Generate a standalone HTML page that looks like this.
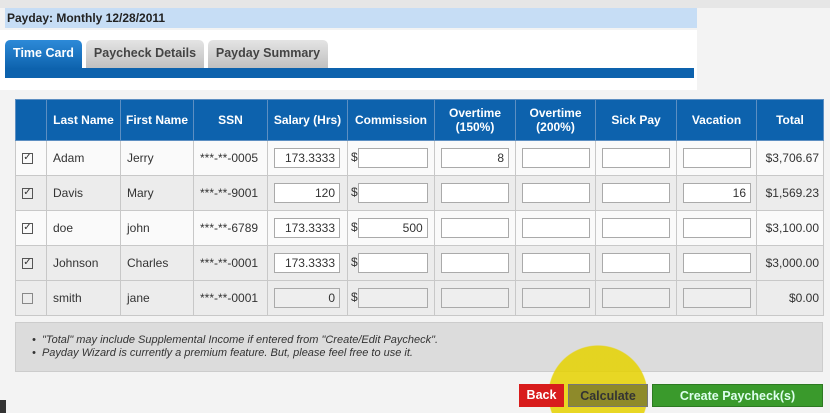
<!DOCTYPE html><html style="width:830px;height:413px;overflow:hidden"><head><style>
body{margin:0;width:830px;height:413px;overflow:hidden;background:#f3f3f3;font-family:"Liberation Sans",Arial,sans-serif;position:relative}
.a{position:absolute}
.hdr{left:5px;top:8px;width:692px;height:20px;background:#c6ddf5;font-weight:bold;font-size:12px;line-height:20px;color:#222;padding-left:2px;box-sizing:border-box}
.tab{top:40px;height:29px;font-weight:bold;font-size:12.5px;line-height:27px;text-align:center;border-radius:5px 5px 0 0;background:linear-gradient(#e4e4e4,#bfbfbf);color:#444}
table{position:absolute;left:15px;top:99px;border-collapse:collapse;font-size:12px;color:#333}
td,th{border:1px solid #c8c8c8;padding:0}
th{background:#0d62ad;color:#fff;font-size:12px;height:40px;border-color:#5d8fc2}
td{height:34px;padding-left:6px}
tr.g td{background:#ececec}
tr.w td{background:#fafafa}
.i{display:inline-block;width:66px;height:20px;border:1px solid #aaa;background:#fff;box-sizing:border-box;text-align:right;padding-right:4px;line-height:18px;vertical-align:middle}
.cb{display:inline-block;width:9px;height:9px;border:1px solid #555;font-size:10px;line-height:8px;text-align:center;vertical-align:middle}
.btn{top:384px;height:23px;font-weight:bold;font-size:12.5px;line-height:23px;text-align:center;color:#fff;box-sizing:border-box}
</style></head><body>
<div class="a" style="left:0;top:0;width:830px;height:8px;background:#e6e6e6"></div>
<div class="a" style="left:0;top:30px;width:697px;height:60px;background:#fff"></div>
<div class="a hdr">Payday: Monthly 12/28/2011</div>
<div class="a tab" style="left:5px;width:77px;background:linear-gradient(#2d8ad8,#0d62ad);color:#fff">Time Card</div>
<div class="a tab" style="left:86px;width:118px">Paycheck Details</div>
<div class="a tab" style="left:208px;width:120px">Payday Summary</div>
<div class="a" style="left:5px;top:68px;width:689px;height:10px;background:#0d62ad"></div>
<table>
<tr><th style="width:30px"></th><th style="width:73px">Last Name</th><th style="width:72px">First Name</th><th style="width:73px">SSN</th><th style="width:79px">Salary (Hrs)</th><th style="width:86px">Commission</th><th style="width:80px">Overtime<br>(150%)</th><th style="width:79px">Overtime<br>(200%)</th><th style="width:80px">Sick Pay</th><th style="width:79px">Vacation</th><th style="width:66px">Total</th></tr>
<tr class="w"><td><span class="cb">✓</span></td><td>Adam</td><td>Jerry</td><td>***-**-0005</td><td><span class="i">173.3333</span></td><td style="padding-left:3px">$<span class="i" style="width:70px"></span></td><td><span class="i" style="width:68px">8</span></td><td><span class="i" style="width:68px"></span></td><td><span class="i" style="width:68px"></span></td><td><span class="i" style="width:68px"></span></td><td style="text-align:right;padding-right:4px">$3,706.67</td></tr>
<tr class="g"><td><span class="cb">✓</span></td><td>Davis</td><td>Mary</td><td>***-**-9001</td><td><span class="i">120</span></td><td style="padding-left:3px">$<span class="i" style="width:70px"></span></td><td><span class="i" style="width:68px"></span></td><td><span class="i" style="width:68px"></span></td><td><span class="i" style="width:68px"></span></td><td><span class="i" style="width:68px">16</span></td><td style="text-align:right;padding-right:4px">$1,569.23</td></tr>
<tr class="w"><td><span class="cb">✓</span></td><td>doe</td><td>john</td><td>***-**-6789</td><td><span class="i">173.3333</span></td><td style="padding-left:3px">$<span class="i" style="width:70px">500</span></td><td><span class="i" style="width:68px"></span></td><td><span class="i" style="width:68px"></span></td><td><span class="i" style="width:68px"></span></td><td><span class="i" style="width:68px"></span></td><td style="text-align:right;padding-right:4px">$3,100.00</td></tr>
<tr class="g"><td><span class="cb">✓</span></td><td>Johnson</td><td>Charles</td><td>***-**-0001</td><td><span class="i">173.3333</span></td><td style="padding-left:3px">$<span class="i" style="width:70px"></span></td><td><span class="i" style="width:68px"></span></td><td><span class="i" style="width:68px"></span></td><td><span class="i" style="width:68px"></span></td><td><span class="i" style="width:68px"></span></td><td style="text-align:right;padding-right:4px">$3,000.00</td></tr>
<tr class="g"><td><span class="cb" style="border-color:#888"></span></td><td>smith</td><td>jane</td><td>***-**-0001</td><td><span class="i" style="background:#eee">0</span></td><td style="padding-left:3px">$<span class="i" style="width:70px;background:#eee"></span></td><td><span class="i" style="width:68px;background:#eee"></span></td><td><span class="i" style="width:68px;background:#eee"></span></td><td><span class="i" style="width:68px;background:#eee"></span></td><td><span class="i" style="width:68px;background:#eee"></span></td><td style="text-align:right;padding-right:4px">$0.00</td></tr>
</table>
<div class="a" style="left:15px;top:322px;width:808px;height:50px;background:#dcdcdc;border:1px solid #ccc;box-sizing:border-box;font-size:11px;font-style:italic;color:#333;padding:11px 0 0 16px;line-height:13px">
• &nbsp;"Total" may include Supplemental Income if entered from "Create/Edit Paycheck".<br>• &nbsp;Payday Wizard is currently a premium feature. But, please feel free to use it.</div>
<div class="a" style="left:548px;top:345px;width:100px;height:68px;background:radial-gradient(circle 50px at 50px 50px,rgba(230,210,0,.85) 49px,transparent 50px)"></div>
<div class="a btn" style="left:519px;width:45px;background:#d81c1c">Back</div>
<div class="a btn" style="left:568px;width:80px;background:#8e8a2a;border:1px solid #777;color:#333">Calculate</div>
<div class="a btn" style="left:652px;width:171px;background:#3a9a2c;border:1px solid #2d7a22;color:#dfe">Create Paycheck(s)</div>
<div class="a" style="left:0;top:400px;width:6px;height:13px;background:#333"></div>
</body></html>
